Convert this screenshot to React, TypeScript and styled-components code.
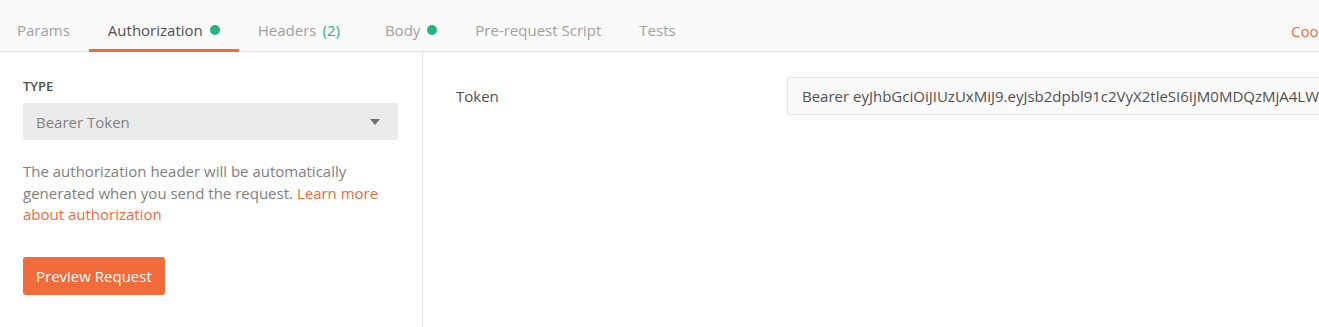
import React from 'react';
import styled, { createGlobalStyle } from 'styled-components';

const GlobalStyle = createGlobalStyle`
  html, body {
    margin: 0;
    padding: 0;
    background: #ffffff;
    font-family: "Open Sans", "Noto Sans", sans-serif;
    overflow: hidden;
  }
`;

const Page = styled.div`
  width: 1319px;
  height: 327px;
  display: flex;
  flex-direction: column;
  overflow: hidden;
`;

const TabBar = styled.div`
  height: 51px;
  display: flex;
  align-items: stretch;
  background: #fafafa;
  border-bottom: 1px solid #e4e4e4;
  flex-shrink: 0;
`;

const Tab = styled.div<{ $active?: boolean }>`
  display: flex;
  align-items: center;
  gap: 6px;
  padding: 10px 19px 0;
  font-size: 15px;
  color: ${p => (p.$active ? '#505050' : '#a0a0a0')};
  border-bottom: 3px solid ${p => (p.$active ? '#f26b3a' : 'transparent')};
  margin-bottom: -1px;
  white-space: nowrap;
  &:first-child {
    padding-left: 17px;
  }
`;

const Count = styled.span`
  color: #26b47f;
  margin-right: 7px;
`;

const Dot = styled.span`
  width: 10px;
  height: 10px;
  border-radius: 50%;
  background: #26b47f;
  display: inline-block;
  margin-left: 1px;
`;

const Spacer = styled.div`
  flex: 1;
`;

const Cookies = styled.div`
  display: flex;
  align-items: center;
  padding-top: 10px;
  font-size: 15px;
  color: #f26b3a;
  width: 28px;
  overflow: hidden;
  white-space: nowrap;
`;

const Body = styled.div`
  flex: 1;
  display: flex;
`;

const Sidebar = styled.div`
  width: 423px;
  box-sizing: border-box;
  border-right: 1px solid #e8e8e8;
  padding: 25px 25px 0 23px;
  flex-shrink: 0;
`;

const Label = styled.div`
  font-size: 13px;
  font-weight: 600;
  color: #505050;
  text-transform: uppercase;
  line-height: 18px;
  margin-bottom: 8px;
`;

const Select = styled.div`
  height: 37px;
  width: 375px;
  box-sizing: border-box;
  background: #ebebeb;
  border-radius: 3px;
  display: flex;
  align-items: center;
  justify-content: space-between;
  padding: 0 18px 0 13px;
  font-size: 15px;
  color: #808080;
`;

const Caret = styled.span`
  width: 0;
  height: 0;
  border-left: 5px solid transparent;
  border-right: 5px solid transparent;
  border-top: 6px solid #707070;
`;

const Description = styled.p`
  margin: 21px 0 0;
  font-size: 15px;
  line-height: 21.5px;
  color: #808080;
  width: 375px;
`;

const Link = styled.a`
  color: #f26b3a;
  text-decoration: none;
`;

const Button = styled.button`
  margin-top: 31px;
  height: 38px;
  padding: 0 13px;
  background: #f26b3a;
  color: #ffffff;
  border: none;
  border-radius: 3px;
  font-family: inherit;
  font-size: 15px;
  cursor: pointer;
`;

const Main = styled.div`
  flex: 1;
  padding: 25px 0 0 33px;
  overflow: hidden;
`;

const FieldRow = styled.div`
  display: flex;
  align-items: center;
`;

const FieldLabel = styled.div`
  width: 331px;
  font-size: 15px;
  color: #505050;
  flex-shrink: 0;
`;

const Input = styled.div`
  flex: 1;
  height: 38px;
  box-sizing: border-box;
  background: #fafafa;
  border: 1px solid #e6e6e6;
  border-right: none;
  border-radius: 3px 0 0 3px;
  display: flex;
  align-items: center;
  padding-left: 14px;
  font-size: 15px;
  color: #505050;
  white-space: nowrap;
  overflow: hidden;
`;

const tabs = [
  { name: 'Params' },
  { name: 'Authorization', dot: true, active: true },
  { name: 'Headers', count: 2 },
  { name: 'Body', dot: true },
  { name: 'Pre-request Script' },
  { name: 'Tests' },
];

const App: React.FC = () => {
  return (
    <Page>
      <GlobalStyle />
      <TabBar>
        {tabs.map(t => (
          <Tab key={t.name} $active={t.active}>
            {t.name}
            {t.count !== undefined && <Count>({t.count})</Count>}
            {t.dot && <Dot />}
          </Tab>
        ))}
        <Spacer />
        <Cookies>Cookies</Cookies>
      </TabBar>
      <Body>
        <Sidebar>
          <Label>Type</Label>
          <Select>
            Bearer Token
            <Caret />
          </Select>
          <Description>
            The authorization header will be automatically generated when you send the request.{' '}
            <Link href="#">Learn more about authorization</Link>
          </Description>
          <Button>Preview Request</Button>
        </Sidebar>
        <Main>
          <FieldRow>
            <FieldLabel>Token</FieldLabel>
            <Input>
              Bearer eyJhbGciOiJIUzUxMiJ9.eyJsb2dpbl91c2VyX2tleSI6IjM0MDQzMjA4LWE2ZjQtNDc3Yi05ZjE0LTVmOGYxZWQ0ZGFkZCJ9
            </Input>
          </FieldRow>
        </Main>
      </Body>
    </Page>
  );
};

export default App;
